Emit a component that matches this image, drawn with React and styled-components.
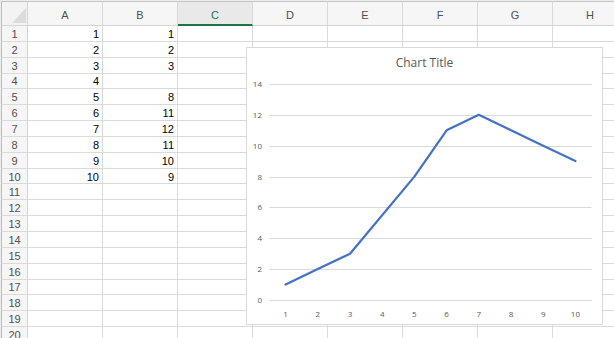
import React from 'react';
import styled, {createGlobalStyle} from 'styled-components';

const GlobalStyle = createGlobalStyle`
    html, body {
        margin: 0;
        padding: 0;
        background: #ffffff;
        overflow: hidden;
    }

    body {
        font-family: "Liberation Sans", Arial, sans-serif;
    }
`

const COLUMNS = ['A', 'B', 'C', 'D', 'E', 'F', 'G', 'H'];
const ROW_COUNT = 20;
const colA = [1, 2, 3, 4, 5, 6, 7, 8, 9, 10];
const colB = [1, 2, 3, null, 8, 11, 12, 11, 10, 9];

// chart geometry, in page pixels (the svg viewBox uses the same space)
const PLOT_LEFT = 269.5;
const PLOT_RIGHT = 591.5;
const ZERO_Y = 300;
const UNIT = 15.43;
const STEP = 32.2;

const xAt = (i) => PLOT_LEFT + STEP * (i + 0.5);
const yAt = (v) => ZERO_Y - v * UNIT;

export default function App() {
    const points = colB
        .map((v, i) => (v === null ? null : `${xAt(i).toFixed(1)},${yAt(v).toFixed(1)}`))
        .filter(Boolean)
        .join(' ');

    return (
        <Page>
            <GlobalStyle />
            <TopStrip />
            <Sheet>
                <Corner>
                    <Triangle />
                </Corner>
                {COLUMNS.map((c) => (
                    <ColHead key={c} $selected={c === 'C'}>{c}</ColHead>
                ))}
                {Array.from({length: ROW_COUNT}, (_, r) => (
                    <React.Fragment key={r}>
                        <RowHead>{r + 1}</RowHead>
                        {COLUMNS.map((c) => {
                            let value = '';
                            if (c === 'A' && r < 10) value = colA[r];
                            if (c === 'B' && r < 10 && colB[r] !== null) value = colB[r];
                            return <Cell key={c}>{value}</Cell>;
                        })}
                    </React.Fragment>
                ))}
            </Sheet>

            <Chart>
                <ChartTitle>Chart Title</ChartTitle>
                <svg width="355" height="246" viewBox="247 78 355 246">
                    {[0, 2, 4, 6, 8, 10, 12, 14].map((v) => (
                        <g key={v}>
                            <line
                                x1={PLOT_LEFT}
                                x2={PLOT_RIGHT}
                                y1={Math.round(yAt(v)) + 0.5}
                                y2={Math.round(yAt(v)) + 0.5}
                                stroke="#d9d9d9"
                                strokeWidth="1"
                            />
                            <AxisText x="262" y={yAt(v) + 3} textAnchor="end">{v}</AxisText>
                        </g>
                    ))}
                    {colA.map((n, i) => (
                        <AxisText key={n} x={xAt(i)} y="316.5" textAnchor="middle">{n}</AxisText>
                    ))}
                    <polyline
                        points={points}
                        fill="none"
                        stroke="#4472c4"
                        strokeWidth="2.25"
                        strokeLinejoin="round"
                        strokeLinecap="round"
                    />
                </svg>
            </Chart>
        </Page>
    )
}

const Page = styled.div`
    position: relative;
    width: 614px;
    height: 338px;
    overflow: hidden;
    border-left: 1px solid #ececec;
    box-sizing: border-box;
`

const TopStrip = styled.div`
    height: 1px;
    background: #ececec;
`

const Sheet = styled.div`
    display: grid;
    grid-template-columns: 27px repeat(8, 75px);
    grid-template-rows: 25px repeat(${ROW_COUNT}, 15.85px);
    font-size: 11px;
`

const Corner = styled.div`
    display: flex;
    justify-content: flex-end;
    align-items: flex-end;
    box-sizing: border-box;
    padding: 0 1px 2px 0;
    background: #f3f3f3;
    border-top: 1px solid #c4c4c4;
    border-left: 1px solid #bdbdbd;
    border-right: 1px solid #d4d4d4;
    border-bottom: 1px solid #d4d4d4;
`

const Triangle = styled.span`
    width: 14px;
    height: 15px;
    background: #dcdcdc;
    clip-path: polygon(100% 0, 100% 100%, 0 100%);
`

const ColHead = styled.div`
    display: flex;
    justify-content: center;
    align-items: center;
    box-sizing: border-box;
    padding-top: 3px;
    background: ${(p) => (p.$selected ? '#e9e9e9' : '#f6f6f6')};
    color: ${(p) => (p.$selected ? '#217346' : '#505050')};
    border-top: 1px solid #c4c4c4;
    border-right: 1px solid #d9d9d9;
    border-bottom: ${(p) => (p.$selected ? '2px solid #217346' : '1px solid #d4d4d4')};
`

const RowHead = styled.div`
    display: flex;
    justify-content: center;
    align-items: center;
    box-sizing: border-box;
    padding-top: 1px;
    background: #f6f6f6;
    color: #505050;
    border-left: 1px solid #bdbdbd;
    border-right: 1px solid #d4d4d4;
    border-bottom: 1px solid #dadada;
`

const Cell = styled.div`
    display: flex;
    justify-content: flex-end;
    align-items: center;
    box-sizing: border-box;
    padding: 1px 3px 0 0;
    color: #000000;
    background: #ffffff;
    border-right: 1px solid #dadada;
    border-bottom: 1px solid #dadada;
`

const Chart = styled.div`
    position: absolute;
    left: 245px;
    top: 47px;
    width: 357px;
    height: 278px;
    box-sizing: border-box;
    border: 1px solid #d9d9d9;
    background: #ffffff;
    display: flex;
    flex-direction: column;
`

const ChartTitle = styled.div`
    height: 30px;
    box-sizing: border-box;
    padding-top: 8px;
    text-align: center;
    font-family: "Open Sans", "Liberation Sans", sans-serif;
    font-size: 12px;
    line-height: 14px;
    color: #595959;
`

const AxisText = styled.text`
    font-family: "Open Sans", "Liberation Sans", sans-serif;
    font-size: 8px;
    fill: #595959;
`
